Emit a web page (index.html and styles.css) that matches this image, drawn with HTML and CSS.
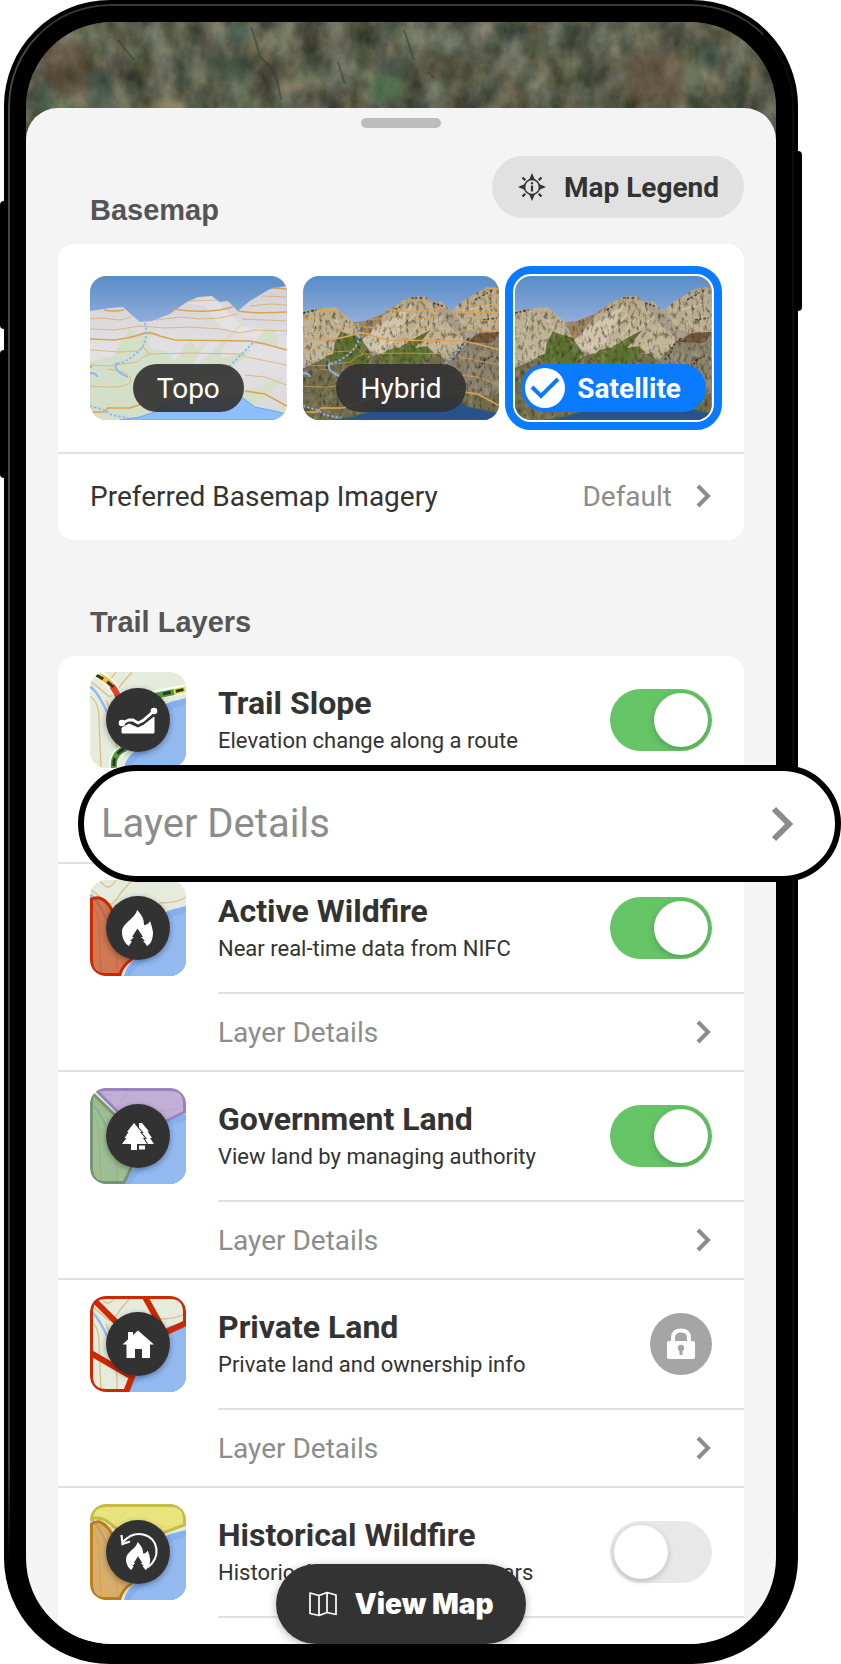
FILE: index.html
```
<!DOCTYPE html>
<html lang="en">
<head>
<meta charset="utf-8">
<meta name="viewport" content="width=device-width, initial-scale=1">
<title>Map Layers</title>
<link rel="stylesheet" href="styles.css">
</head>
<body>
<svg class="defs" aria-hidden="true">
  <defs>
    <linearGradient id="sky" x1="0" y1="0" x2="0" y2="1"><stop offset="0" stop-color="#588cc6"/><stop offset="1" stop-color="#a3b6e2"/></linearGradient>
    <linearGradient id="snow" x1="0" y1="0" x2="0" y2="1"><stop offset="0" stop-color="#d3d2d4"/><stop offset=".5" stop-color="#e3e1e3"/><stop offset="1" stop-color="#d9d8da"/></linearGradient>
    <linearGradient id="rock" x1="0" y1="0" x2="0" y2="1"><stop offset="0" stop-color="#b3a689"/><stop offset=".45" stop-color="#c2b699"/><stop offset="1" stop-color="#7d7154"/></linearGradient>
    <filter id="grain" x="0" y="0" width="1" height="1" color-interpolation-filters="sRGB">
      <feTurbulence type="fractalNoise" baseFrequency=".3 .16" numOctaves="4" seed="8"/>
      <feColorMatrix values="0 0 0 0 .2  0 0 0 0 .17  0 0 0 0 .1  3 0 0 0 -1.5"/>
    </filter>
    <filter id="light" x="0" y="0" width="1" height="1" color-interpolation-filters="sRGB">
      <feTurbulence type="fractalNoise" baseFrequency=".14 .08" numOctaves="3" seed="21"/>
      <feColorMatrix values="0 0 0 0 .88  0 0 0 0 .83  0 0 0 0 .72  2.4 0 0 0 -1.15"/>
    </filter>
    <filter id="ground" x="0" y="0" width="1" height="1" color-interpolation-filters="sRGB">
      <feTurbulence type="fractalNoise" baseFrequency=".04 .03" numOctaves="6" seed="5"/>
      <feColorMatrix values=".42 .1 0 0 .1  .42 0 0 0 .16  .38 0 .08 0 .07  0 0 0 0 1"/>
    </filter>
    <filter id="soft"><feGaussianBlur stdDeviation="3"/></filter>
    <filter id="drop" x="-.3" y="-.3" width="1.6" height="1.6"><feDropShadow dx="0" dy="2" stdDeviation="3" flood-opacity=".35"/></filter>
    <path id="ridge" d="M0 35 20 32 33 31 42 39 50 46 62 45 80 38 97 26 108 21 122 20 130 26 138 25 148 35 160 25 180 13 197 10V144H0Z"/>
    <clipPath id="ridge-clip"><use href="#ridge"/></clipPath>
    <path id="lake" d="M30 144 50 141 65 136 75 128 90 123 120 121 153 122 165 131 180 134 197 138V144Z"/>
    <symbol id="contours" viewBox="0 0 197 144">
      <g fill="none" stroke="#dfa251" stroke-width="1.6">
        <path d="M14 34Q24 36 34 34M83 33Q108 37 130 34L143 31M148 35Q165 38 197 36M183 12 197 13M0 63 25 64Q45 61 52 58T70 60L85 64 160 65 175 68 197 74M3 136H15L18 132 40 132 58 126 75 118M155 115 175 118 197 130"/>
        <path stroke-width=".9" opacity=".75" d="M0 43 12 42 30 44 42 41M66 44 90 41 110 43 130 42 148 38M152 43 197 45M0 53 25 54 50 50 75 52 100 51 130 53 150 57 165 54 197 55M0 89 20 90 32 88 48 86 53 81 60 78 100 77 150 78 157 81 197 89M0 74 30 76 48 75 53 71 60 78M0 110Q42 114 41 103 38 95 18 93M155 99 175 101 197 109M100 25 128 24M160 30 180 28 197 29M172 20 197 21"/>
      </g>
      <g fill="none" stroke="#7fb8ff" stroke-width="1.8">
        <path stroke-dasharray="2.4 2" d="M55 47Q60 66 47 77T27 87M163 67 135 95M0 130 15 134 22 139 38 142"/>
        <path d="M27 87Q22 94 38 101M0 97Q7 97 7 101M0 91H2"/>
      </g>
    </symbol>
    <symbol id="satellite" viewBox="0 0 197 144">
      <rect width="197" height="60" fill="url(#sky)"/>
      <use href="#ridge" fill="url(#rock)"/>
      <g clip-path="url(#ridge-clip)">
        <path d="M50 46 62 45 97 26 78 42 60 66Z" fill="#9a825f"/>
        <path d="M122 20 148 35 165 54 197 56V70L160 62 142 45Z" fill="#a89e8a"/>
        <path d="M58 65 76 50 110 28 97 55 78 82Z" fill="#d0c5aa"/>
        <path d="M0 92 22 82 38 56 58 62 70 80 95 72 128 54 106 78 136 78 150 92 197 88V144H0Z" fill="#716d4c"/>
        <path d="M22 82 34 66 38 55 48 60 57 61 62 72 70 82 58 90 40 86ZM74 84 84 74 98 71 112 62 126 55 118 66 112 72 124 70 130 76 118 84 108 90Z" fill="#5d7030"/>
        <path d="M0 80 24 68 34 58 30 78 0 88Z" fill="#c2b79d"/>
        <path d="M140 88 158 70 166 62 197 57V118L168 120 146 106Z" fill="#8a816c"/>
        <path d="M165 66 176 57 197 56 190 67Z" fill="#6e5236"/>
        <path d="M65 82 92 55M80 78 112 38M96 72 126 36M112 62 140 40M14 42 8 60M30 40 42 58M160 35 190 28" stroke="#dcd2bb" stroke-width="1.4" opacity=".6"/>
        <path d="M150 84 156 77 158 70 166 62M176 92 182 84 190 80M108 22 120 22M172 24 190 14M130 27 140 30M0 37 14 34M92 34 100 29M180 44 194 42" fill="none" stroke="#27231c" stroke-width="1.6" stroke-dasharray="3 1.5 2 2" opacity=".75"/>
        <rect width="197" height="144" filter="url(#light)" opacity=".3"/>
        <rect width="197" height="144" filter="url(#grain)" opacity=".6"/>
      </g>
      <use href="#lake" fill="#29518a" stroke="#35685c"/>
    </symbol>
    <symbol id="tile-base" viewBox="0 0 96 96">
      <path fill="#e5ebdd" d="M0 0H96V96H0Z"/>
      <path fill="none" stroke="#dfc089" stroke-width="1.4" d="M10 0Q18 14 26 0M0 9Q12 18 17 23T30 14L42 0M69 23Q88 23 96 17M0 24Q9 30 9 46L11 96M16 28Q28 54 27 96"/>
      <path fill="none" stroke="#92b9f2" stroke-width="2.4" d="M0 15Q6 17 17 40"/>
      <path fill="#82b0f1" d="M96 26 80 30 60 40 44 80Q36 86 34 96H96Z"/>
      <path fill="#93b9f1" d="M96 33 84 36 64 50 66 76Q46 84 40 96H96Z"/>
    </symbol>
    <symbol id="chevron" viewBox="0 0 16 24"><path d="M2 2 12 12 2 22" fill="none" stroke="currentColor" stroke-width="4"/></symbol>
    <path id="flame" d="M47 30C51 34 54 38 54 45Q58 45 60 41Q62 46 63 52C63 59 61 64 57 66L55 63 53 61H55L51 57H53L47.500 48.500 42 57H44L40 61H42L39 66C34 63 32 57 32 52C32 43 45 39 47 30Z"/>
  </defs>
</svg>

<main class="stage">
  <div class="phone">
    <span class="side-key side-key-up"></span>
    <span class="side-key side-key-down"></span>
    <span class="side-key side-key-power"></span>
    <div class="screen">
      <svg class="backdrop" viewBox="0 0 750 140" preserveAspectRatio="none" aria-hidden="true">
        <rect width="750" height="140" fill="#5e5f4c"/>
        <rect width="750" height="140" filter="url(#ground)"/>
        <g filter="url(#soft)" opacity=".4">
          <path fill="#75543f" d="M20 20H60V75H20ZM600 30H660V80H600Z"/>
          <path fill="#2a4f44" d="M355 38H375V57H355ZM10 60H26V95H10ZM60 50H85V100H60ZM182 35H220V60H182ZM205 5H222V22H205ZM675 18H692V45H675Z"/>
          <path fill="#3f8b50" d="M345 57H376V80H345Z"/>
          <path fill="#c0a080" d="M256 60H280V70H256ZM125 80H155V90H125Z"/>
        </g>
        <path d="M225 5 230 20 234 35 246 46 252 62 255 78M312 40 315 50 319 62M92 18 98 26 108 38M378 8 388 38M402 50 408 56M540 20 547 22" fill="none" stroke="#343a2f" stroke-width="2" opacity=".5"/>
      </svg>
      <div class="sheet">
        <span class="handle"></span>
        <header class="section-head">
          <h2 class="section-title">Basemap</h2>
          <button class="legend" type="button">
            <svg class="legend-icon" viewBox="0 0 28 28" aria-hidden="true">
              <path fill="currentColor" d="M14 0 17 7H11ZM14 28 11 21H17ZM0 14 7 11V17ZM28 14 21 17V11Z"/>
              <circle cx="14" cy="14" r="7.500" fill="none" stroke="currentColor" stroke-width="1.600"/>
              <path stroke="currentColor" stroke-width="2.200" d="M4.500 4.500 7.300 7.300M23.500 4.500 20.700 7.300M4.500 23.500 7.300 20.700M23.500 23.500 20.700 20.700M14 12.500V18.500M14 9.300V11.300"/>
            </svg>
            Map Legend
          </button>
        </header>

        <section class="card">
          <div class="basemaps">
            <button class="basemap" type="button" aria-pressed="false">
              <svg class="thumb" viewBox="0 0 197 144" preserveAspectRatio="xMidYMid slice" aria-hidden="true">
                <rect width="197" height="60" fill="url(#sky)"/>
                <use href="#ridge" fill="url(#snow)"/>
                <path d="M97 27 122 20 152 50 197 56 160 62 130 50 115 30Z" fill="#eeedee" opacity=".45"/>
                <path d="M0 86 24 80 28 68 36 62 38 52 50 58 66 51 58 66Q60 74 66 74T75 75 82 82 94 72 104 68 126 52 116 68 132 66 146 56 147 78 136 96 146 116 164 120 170 112 178 118 197 128V144H0Z" fill="#d3dfc9"/>
                <path d="M176 52 186 55 188 72 164 67Z" fill="#d3dfc9"/>
                <use href="#lake" fill="#8ebefb" stroke="#63a6fa"/>
                <use href="#contours" width="197" height="144"/>
              </svg>
              <span class="pill">Topo</span>
            </button>
            <button class="basemap" type="button" aria-pressed="false">
              <svg class="thumb" viewBox="0 0 197 144" preserveAspectRatio="xMidYMid slice" aria-hidden="true">
                <use href="#satellite" width="197" height="144"/>
                <use href="#contours" width="197" height="144"/>
              </svg>
              <span class="pill">Hybrid</span>
            </button>
            <button class="basemap basemap-on" type="button" aria-pressed="true">
              <svg class="thumb" viewBox="0 0 197 144" preserveAspectRatio="xMidYMid slice" aria-hidden="true">
                <use href="#satellite" width="197" height="144"/>
              </svg>
              <span class="pill">
                <svg class="tick" viewBox="0 0 40 40" aria-hidden="true"><circle cx="20" cy="20" r="20" fill="#fff"/><path d="M7 19 16 28 33 11" fill="none" stroke="#0a7aff" stroke-width="4"/></svg>
                Satellite
              </span>
            </button>
          </div>
          <a class="row" href="#imagery">
            <span class="row-name">Preferred Basemap Imagery</span>
            <span class="row-value">Default</span>
            <svg class="chevron" aria-hidden="true"><use href="#chevron"/></svg>
          </a>
        </section>

        <h2 class="section-title section-title-next">Trail Layers</h2>
        <section class="card card-open">
          <article class="layer">
            <svg class="tile" viewBox="0 0 96 96" aria-hidden="true">
              <use href="#tile-base" width="96" height="96"/>
              <g fill="none">
                <path stroke="#fff" stroke-width="9" d="M5 0Q26 12 30 30M60 24 96 17M24 96Q22 82 36 76"/>
                <path stroke="#d8e84a" stroke-width="6" d="M5 0 12 6M84 20 96 17"/>
                <path stroke="#f4bc45" stroke-width="6" d="M11 5Q19 9 22 14"/>
                <path stroke="#e8441f" stroke-width="6" d="M22 14Q27 20 29 28"/>
                <path stroke="#4e9f32" stroke-width="6" d="M60 25 84 20M24 96Q22 82 36 76"/>
                <path stroke="#333" stroke-width="3" stroke-dasharray="8 5" d="M6 3Q18 9 24 16M73 22 96 17M24 94Q23 82 34 77"/>
              </g>
              <circle cx="48" cy="48" r="32" fill="#333" filter="url(#drop)"/>
              <g fill="#fff"><path d="M32 61V56L39 52 48 56 54 53 64 45V61Z" stroke="#fff" stroke-linejoin="round"/>
                <path d="M32 51 39 48 43 48 48 51 53 48.500 64 39" fill="none" stroke="#333" stroke-width="5.500"/>
                <path d="M32 51 39 48 43 48 48 51 53 48.500 64 39" fill="none" stroke="#fff" stroke-width="2.800"/>
                <circle cx="32" cy="51" r="3.300"/><circle cx="64" cy="39" r="3.300"/></g>
            </svg>
            <label class="layer-text" for="slope"><strong class="layer-name">Trail Slope</strong><span class="layer-note">Elevation change along a route</span></label>
            <input class="switch" id="slope" type="checkbox" role="switch" checked>
            <div class="layer-gap"></div>
          </article>

          <article class="layer">
            <svg class="tile" viewBox="0 0 96 96" aria-hidden="true">
              <use href="#tile-base" width="96" height="96"/>
              <path d="M-1 20Q8 15 15 21T25 38L42 79Q32 86 30 94.500H14Q1.500 94 1.500 80V20" fill="#c8491d" fill-opacity=".72" stroke="#cc2900" stroke-width="3"/>
              <circle cx="48" cy="48" r="32" fill="#333" filter="url(#drop)"/>
              <use href="#flame" fill="#fff"/>
            </svg>
            <label class="layer-text" for="wildfire"><strong class="layer-name">Active Wildfire</strong><span class="layer-note">Near real-time data from NIFC</span></label>
            <input class="switch" id="wildfire" type="checkbox" role="switch" checked>
            <a class="details" href="#wildfire-details">Layer Details <svg class="chevron" aria-hidden="true"><use href="#chevron"/></svg></a>
          </article>

          <article class="layer">
            <svg class="tile" viewBox="0 0 96 96" aria-hidden="true">
              <use href="#tile-base" width="96" height="96"/>
              <path d="M7 3 30 26 76 33 94.500 24V14Q94 1.500 80 1.500H14Q9 2 7 3Z" fill="#b8a0d6" fill-opacity=".8" stroke="#9982c0" stroke-width="3"/>
              <path d="M3 6Q1.500 9 1.500 14V80Q2 94.500 14 94.500H34L46 70 28 30Z" fill="#86b07c" fill-opacity=".75" stroke="#769671" stroke-width="3"/>
              <circle cx="48" cy="48" r="32" fill="#333" filter="url(#drop)"/>
              <path fill="#fff" d="M52 35 59 43.500H57.500L62 50H60L64 56H49V35ZM49 57.500H55V61.500H49Z"/>
              <path fill="#fff" stroke="#333" stroke-width="2" paint-order="stroke" d="M44 35 51.500 44H50L55 50H53L57 56H47V62H41V56H32L36.500 50H34.500L38.500 44H37Z"/>
            </svg>
            <label class="layer-text" for="gov"><strong class="layer-name">Government Land</strong><span class="layer-note">View land by managing authority</span></label>
            <input class="switch" id="gov" type="checkbox" role="switch" checked>
            <a class="details" href="#gov-details">Layer Details <svg class="chevron" aria-hidden="true"><use href="#chevron"/></svg></a>
          </article>

          <article class="layer">
            <svg class="tile" viewBox="0 0 96 96" aria-hidden="true">
              <use href="#tile-base" width="96" height="96"/>
              <g fill="none" stroke="#cc2900"><path stroke-width="3" d="M36 94.500H16Q1.500 94.500 1.500 80V16Q1.500 1.500 16 1.500H80Q94.500 1.500 94.500 16V30"/>
              <path stroke-width="6" d="M4 4 32 32M55 1 75 37M96 27 72 38M1 57 42 81 36 96"/></g>
              <circle cx="48" cy="48" r="32" fill="#333" filter="url(#drop)"/>
              <path fill="#fff" d="M48 34.500 64 48.500H60V62H52V53H45V62H36.500V48.500H32.500L38 43.500V36H43V39Z"/>
            </svg>
            <div class="layer-text"><strong class="layer-name">Private Land</strong><span class="layer-note">Private land and ownership info</span></div>
            <button class="lock" type="button" aria-label="Unlock Private Land">
              <svg class="lock-icon" viewBox="0 0 62 62" aria-hidden="true"><rect x="17" y="28" width="28" height="18" rx="2" fill="#fff"/><path d="M23 30V25Q23 17.500 31 17.500T39 25V30" fill="none" stroke="#fff" stroke-width="4"/><circle cx="31" cy="35" r="3.200" fill="#a5a5a5"/><path d="M29.500 35H32.500V42H29.500Z" fill="#a5a5a5"/></svg>
            </button>
            <a class="details" href="#private-details">Layer Details <svg class="chevron" aria-hidden="true"><use href="#chevron"/></svg></a>
          </article>

          <article class="layer">
            <svg class="tile" viewBox="0 0 96 96" aria-hidden="true">
              <use href="#tile-base" width="96" height="96"/>
              <path d="M1.500 15Q10 12 18 18T34 30L70 30 94.500 21V14Q94 1.500 80 1.500H16Q2 2 1.500 15Z" fill="#ebe36f" fill-opacity=".85" stroke="#c5bd42" stroke-width="3"/>
              <path d="M1.500 20Q8 15 15 21T25 38L42 79Q32 86 30 94.500H14Q1.500 94 1.500 80Z" fill="#d19b43" fill-opacity=".75" stroke="#b98019" stroke-width="3"/>
              <circle cx="48" cy="48" r="32" fill="#333" filter="url(#drop)"/>
              <path d="M33 38Q42 28 53 30.500C69 34 71 54 58 63" fill="none" stroke="#fff" stroke-width="2.200"/>
              <path d="M31.500 31 32.500 40 40 37.500" fill="none" stroke="#fff" stroke-width="2.200"/>
              <use href="#flame" fill="#fff" transform="translate(11 14.500) scale(.78)"/>
            </svg>
            <label class="layer-text" for="history"><strong class="layer-name">Historical Wildfire</strong><span class="layer-note">Historical perimeters, past years</span></label>
            <input class="switch" id="history" type="checkbox" role="switch">
            <div class="layer-end"></div>
          </article>
        </section>
      </div>
      <div class="dock">
        <button class="view-map" type="button">
          <svg class="map-icon" viewBox="0 0 28 26" aria-hidden="true"><path d="M1 2 10 4.500 18 1.500 27 4V23.500L18 21.500 10 24.500 1 22.500ZM10 4.500V24.500M18 1.500V21.500" fill="none" stroke="currentColor" stroke-width="1.700" stroke-linejoin="round"/></svg>
          View Map
        </button>
      </div>
    </div>
    <a class="callout" href="#slope-details">Layer Details <svg class="callout-chevron" aria-hidden="true"><use href="#chevron"/></svg></a>
  </div>
</main>
</body>
</html>
```
FILE: styles.css
```
* { box-sizing: border-box; }

body {
  margin: 0;
  background: #fff;
  color: #333;
  font-family: Roboto, "Liberation Sans", sans-serif;
}

button {
  border: 0;
  padding: 0;
  font: inherit;
  color: inherit;
  cursor: pointer;
}

a { color: inherit; text-decoration: none; }

.defs { position: absolute; width: 0; height: 0; }

.stage { padding: 0 43px 0 4px; }

.phone {
  position: relative;
  padding: 22px 22px 20px;
  border-radius: 106px;
  background: #000;
}

.phone::before {
  content: "";
  position: absolute;
  inset: 4px;
  border: 2px solid;
  border-color: #383838 #0c0c0c transparent #484848;
  border-radius: 102px;
  mask-image: linear-gradient(#000 88%, transparent 94%);
}

.side-key {
  position: absolute;
  left: -4px;
  width: 8px;
  height: 128px;
  border-radius: 4px;
  background: #000;
}

.side-key-up { top: 201px; }
.side-key-down { top: 350px; }
.side-key-power { top: 151px; right: -4px; left: auto; height: 160px; }

.screen {
  position: relative;
  overflow: hidden;
  padding-top: 86px;
  border-radius: 86px;
}

.backdrop {
  position: absolute;
  top: 0;
  left: 0;
  width: 100%;
  height: 140px;
}

.sheet {
  position: relative;
  padding: 10px 32px 0;
  border-radius: 32px 32px 0 0;
  background: #f4f4f4;
}

.handle {
  display: block;
  width: 80px;
  height: 10px;
  margin: 0 auto 28px;
  border-radius: 5px;
  background: #bdbdbd;
}

.section-head {
  display: flex;
  justify-content: space-between;
  align-items: flex-end;
  height: 70px;
  margin-bottom: 18px;
}

.section-title {
  margin: 0;
  padding-left: 32px;
  color: #555;
  font: bold 29px/32px "Liberation Sans", sans-serif;
}

.section-title-next { margin: 66px 0 18px; }

.legend {
  display: flex;
  align-self: flex-start;
  align-items: center;
  gap: 18px;
  height: 62px;
  padding: 0 25px 0 26px;
  border-radius: 31px;
  background: #e1e1e1;
  font-size: 28px;
  font-weight: 700;
}

.legend-icon { width: 28px; height: 28px; }

.card { border-radius: 16px; background: #fff; }
.card-open { border-radius: 16px 16px 0 0; }

.basemaps {
  display: grid;
  grid-template-columns: repeat(3, 1fr);
  gap: 16px;
  padding: 32px;
  border-bottom: 2px solid #e1e1e1;
}

.basemap {
  position: relative;
  display: flex;
  justify-content: center;
  align-items: flex-end;
  height: 144px;
  padding-bottom: 8px;
  border-radius: 16px;
  background: none;
}

.basemap-on {
  outline: 8px solid #0a7aff;
  outline-offset: 2px;
}

.thumb {
  position: absolute;
  inset: 0;
  width: 100%;
  height: 100%;
  border-radius: 16px;
}

.pill {
  position: relative;
  display: flex;
  align-items: center;
  gap: 12px;
  height: 48px;
  padding: 0 24px;
  border-radius: 24px;
  background: rgba(51, 51, 51, .92);
  color: #fff;
  font-size: 28px;
}

.basemap-on .pill {
  padding: 0 25px 0 4px;
  background: #0a7aff;
  font-weight: 700;
}

.tick { width: 40px; height: 40px; }

.row {
  display: flex;
  align-items: center;
  gap: 24px;
  height: 86px;
  padding: 0 32px 2px;
  font-size: 28px;
}

.row-name { flex: 1; }
.row-value { color: #8c8c8c; }

.chevron { width: 16px; height: 24px; color: #8c8c8c; }

.layer {
  display: grid;
  grid-template-columns: 96px 1fr auto;
  column-gap: 32px;
  align-items: center;
  padding: 16px 0 0 32px;
  border-bottom: 2px solid #e1e1e1;
}

.layer:last-child { border-bottom: 0; }

.tile { width: 96px; height: 96px; border-radius: 16px; }

.layer-text { display: flex; flex-direction: column; gap: 4px; }
.layer-name { font-size: 32px; line-height: 38px; }
.layer-note { font-size: 22px; line-height: 30px; }

.switch {
  appearance: none;
  width: 102px;
  height: 62px;
  margin: 0 32px 0 0;
  padding: 4px;
  border-radius: 31px;
  background: #e8e8e8;
}

.switch::before {
  content: "";
  display: block;
  width: 54px;
  height: 54px;
  border-radius: 50%;
  background: #fff;
  box-shadow: 0 2px 6px rgba(0, 0, 0, .2);
}

.switch:checked { background: #65c466; }
.switch:checked::before { margin-left: auto; }

.lock {
  width: 62px;
  height: 62px;
  margin-right: 32px;
  border-radius: 50%;
  background: #a5a5a5;
}

.lock-icon { display: block; width: 62px; height: 62px; }

.details {
  grid-column: 2 / -1;
  display: flex;
  justify-content: space-between;
  align-items: center;
  height: 78px;
  margin-top: 16px;
  padding-right: 32px;
  border-top: 2px solid #e1e1e1;
  color: #8c8c8c;
  font-size: 28px;
}

.layer-gap { grid-column: 1 / -1; height: 94px; }

.layer-end {
  grid-column: 2 / -1;
  height: 28px;
  margin-top: 16px;
  border-top: 2px solid #e1e1e1;
}

.dock {
  position: absolute;
  right: 0;
  bottom: 0;
  left: 0;
  display: flex;
  justify-content: center;
}

.view-map {
  display: flex;
  align-items: center;
  gap: 18px;
  height: 80px;
  padding: 0 33px;
  border-radius: 40px;
  background: #333;
  box-shadow: 0 2px 8px rgba(0, 0, 0, .3);
  color: #fff;
  font-family: Inter, sans-serif;
  font-size: 28px;
  font-weight: 900;
}

.map-icon { width: 28px; height: 26px; }

.callout {
  position: absolute;
  top: 765px;
  right: -43px;
  left: 74px;
  display: flex;
  justify-content: space-between;
  align-items: center;
  height: 117px;
  padding: 0 40px 0 17px;
  border: 6px solid #000;
  border-radius: 59px;
  background: #fff;
  color: #8c8c8c;
  font-size: 40px;
}

.callout-chevron { width: 24px; height: 36px; color: #8c8c8c; }
```
